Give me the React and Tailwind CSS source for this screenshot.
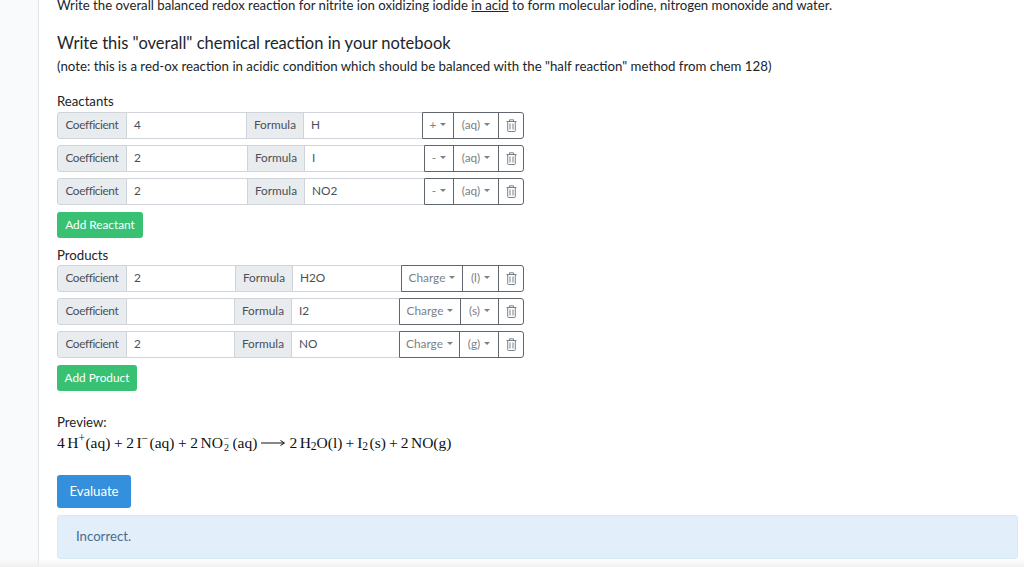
const reactants = [
  { coef: '4', formula: 'H', charge: '+', state: '(aq)', coefW: 'w-[119px]', formW: 'w-[118px]', stateW: 'w-[45px]' },
  { coef: '2', formula: 'I', charge: '-', state: '(aq)', coefW: 'w-[120px]', formW: 'w-[119px]', stateW: 'w-[45px]' },
  { coef: '2', formula: 'NO2', charge: '-', state: '(aq)', coefW: 'w-[120px]', formW: 'w-[119px]', stateW: 'w-[45px]' },
];

const products = [
  { coef: '2', formula: 'H2O', charge: 'Charge', state: '(l)', coefW: 'w-[108px]', formW: 'w-[108px]', stateW: 'w-[36px]' },
  { coef: '', formula: 'I2', charge: 'Charge', state: '(s)', coefW: 'w-[107px]', formW: 'w-[107px]', stateW: 'w-[38px]' },
  { coef: '2', formula: 'NO', charge: 'Charge', state: '(g)', coefW: 'w-[107px]', formW: 'w-[107px]', stateW: 'w-[39px]' },
];

function Caret() {
  return <span className="ml-[4px] inline-block border-x-[3px] border-t-[3px] border-x-transparent border-t-[#7a8188]" />;
}

function TrashIcon() {
  return (
    <svg width="11" height="13" viewBox="0 0 11 13" fill="none" stroke="#6c757d" strokeWidth="0.9">
      <path d="M0.5 2.5h10M3.5 2.5V0.8h4v1.7M1.7 2.5v9.2q0 0.8 0.8 0.8h6q0.8 0 0.8-0.8V2.5M4 4.5v6M7 4.5v6" />
    </svg>
  );
}

function Field({ value, width }) {
  return (
    <span className={`${width} flex shrink-0 items-center bg-white border-y border-[#ced4da] pl-[7px] pb-[2px] text-[#495057]`}>
      {value}
    </span>
  );
}

function ChemRow({ row }) {
  return (
    <div className="flex h-[27px] w-[467px] text-[11.8px] leading-none">
      <span className="flex w-[70px] shrink-0 items-center bg-[#e9ecef] border border-[#ced4da] rounded-l-[3px] pl-[7.5px] pb-[2px] text-[#495057] whitespace-nowrap tracking-[-0.4px] [font-variant-ligatures:none]">
        Coefficient
      </span>
      <Field value={row.coef} width={row.coefW} />
      <span className="flex w-[58px] shrink-0 items-center justify-center bg-[#e9ecef] border border-[#ced4da] pb-[2px] text-[#495057]">
        Formula
      </span>
      <Field value={row.formula} width={row.formW} />
      <div className="flex flex-1 border border-[#5f666d] rounded-r-[3px] text-[#7a8188]">
        <span className="flex flex-1 items-center justify-center pb-[2px] whitespace-nowrap">
          {row.charge}
          <Caret />
        </span>
        <span className={`${row.stateW} flex shrink-0 items-center justify-center border-l border-[#5f666d] pb-[2px] whitespace-nowrap`}>
          {row.state}
          <Caret />
        </span>
        <span className="flex w-[25px] shrink-0 items-center justify-center border-l border-[#5f666d]">
          <TrashIcon />
        </span>
      </div>
    </div>
  );
}

function Equation() {
  const script = 'text-[11.5px] leading-none';
  return (
    <p className="mt-[2px] flex items-center h-[20px] font-['Liberation_Serif',serif] text-[15.5px] leading-[20px] text-[#111] whitespace-nowrap">
      <span>4</span>
      <span className="ml-[2.5px]">H</span>
      <span className={`${script} relative -top-[4px]`}>+</span>
      <span className="ml-[0.5px]">(aq)</span>
      <span className="mx-[3.5px]">+</span>
      <span>2</span>
      <span className="ml-[2.5px]">I</span>
      <span className={`${script} relative -top-[4px]`}>−</span>
      <span className="ml-[1.5px]">(aq)</span>
      <span className="mx-[3.5px]">+</span>
      <span>2</span>
      <span className="ml-[2.5px]">NO</span>
      <span className="flex w-[7px] flex-col items-center text-[10px] leading-[9px]">
        <span>−</span>
        <span>2</span>
      </span>
      <span className="ml-[2.5px]">(aq)</span>
      <svg className="mx-[4px]" width="24" height="8" viewBox="0 0 24 8" fill="none" stroke="#111" strokeWidth="1">
        <path d="M0 4h23M19.5 1.5L23.5 4l-4 2.5" />
      </svg>
      <span>2</span>
      <span className="ml-[2.5px]">H</span>
      <span className={`${script} relative top-[4px]`}>2</span>
      <span>O(l)</span>
      <span className="mx-[3px]">+</span>
      <span>I</span>
      <span className={`${script} relative top-[4px]`}>2</span>
      <span className="ml-[1.5px]">(s)</span>
      <span className="mx-[3px]">+</span>
      <span>2</span>
      <span className="ml-[2.5px]">NO(g)</span>
    </p>
  );
}

export default function App() {
  return (
    <div className="relative flex h-[567px] overflow-hidden bg-white font-['Lato',sans-serif] text-[#212529]">
      {/* Sidebar rail */}
      <div className="w-[39px] shrink-0 bg-[#f8fafc] border-r border-[#e2e5e8]" />

      <div className="flex-1 pl-[18px] pr-[6px] -mt-[4px]">
        <p className="text-[13.2px] leading-[18px]">
          Write the overall balanced redox reaction for nitrite ion oxidizing iodide <u>in acid</u> to form molecular iodine, nitrogen monoxide and water.
        </p>

        <h5 className="mt-[19px] text-[16.5px] leading-[21px]">Write this "overall" chemical reaction in your notebook</h5>
        <p className="mt-[3px] text-[13.25px] leading-[18px]">
          (note: this is a red-ox reaction in acidic condition which should be balanced with the "half reaction" method from chem 128)
        </p>

        <div className="mt-[17px] text-[13.2px] leading-[18px]">Reactants</div>
        <div className="mt-[2px] flex flex-col gap-[6px]">
          {reactants.map((r, i) => <ChemRow key={i} row={r} />)}
        </div>
        <button className="mt-[7px] block h-[26px] w-[86px] rounded-[3px] bg-[#38c172] text-[11.8px] text-white">Add Reactant</button>

        <div className="mt-[8px] text-[13.2px] leading-[18px]">Products</div>
        <div className="mt-[1px] flex flex-col gap-[6px]">
          {products.map((r, i) => <ChemRow key={i} row={r} />)}
        </div>
        <button className="mt-[7px] block h-[26px] w-[80px] rounded-[3px] bg-[#38c172] text-[11.8px] text-white">Add Product</button>

        <div className="mt-[22px] text-[13.2px] leading-[18px]">Preview:</div>
        <Equation />

        <button className="mt-[22px] block h-[33px] w-[74px] rounded-[3px] bg-[#3490dc] text-[13.2px] text-white">Evaluate</button>

        <div className="mt-[7px] flex h-[44px] items-center rounded-[3px] border border-[#d6e9f9] bg-[#e2eefa] px-[18px] text-[13.2px] text-[#4a6c8c]">
          Incorrect.
        </div>
      </div>

      {/* Scroll shadow along the bottom edge */}
      <div className="absolute inset-x-0 bottom-0 h-[8px] bg-gradient-to-b from-transparent to-[#f0f0f0]" />
    </div>
  );
}
